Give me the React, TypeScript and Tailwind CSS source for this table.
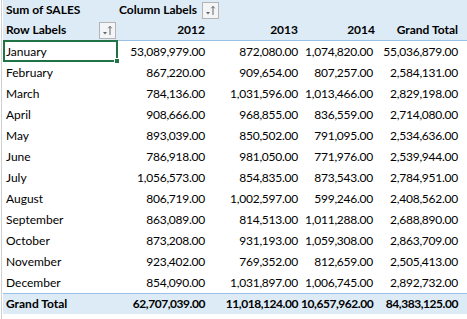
import React from 'react';

const rows: [string, string, string, string, string][] = [
  ['January', '53,089,979.00', '872,080.00', '1,074,820.00', '55,036,879.00'],
  ['February', '867,220.00', '909,654.00', '807,257.00', '2,584,131.00'],
  ['March', '784,136.00', '1,031,596.00', '1,013,466.00', '2,829,198.00'],
  ['April', '908,666.00', '968,855.00', '836,559.00', '2,714,080.00'],
  ['May', '893,039.00', '850,502.00', '791,095.00', '2,534,636.00'],
  ['June', '786,918.00', '981,050.00', '771,976.00', '2,539,944.00'],
  ['July', '1,056,573.00', '854,835.00', '873,543.00', '2,784,951.00'],
  ['August', '806,719.00', '1,002,597.00', '599,246.00', '2,408,562.00'],
  ['September', '863,089.00', '814,513.00', '1,011,288.00', '2,688,890.00'],
  ['October', '873,208.00', '931,193.00', '1,059,308.00', '2,863,709.00'],
  ['November', '923,402.00', '769,352.00', '812,659.00', '2,505,413.00'],
  ['December', '854,090.00', '1,031,897.00', '1,006,745.00', '2,892,732.00'],
];

const cols = 'grid grid-cols-[115px_90px_93px_75px_1fr]';

function FilterButton() {
  return (
    <span className="inline-flex items-center justify-center w-[17px] h-[17px] border border-[#b4b4b4] bg-[#f3f5f7]">
      <svg width="13" height="13" viewBox="0 0 13 13">
        <path d="M2 8 L6 8 L4 10.5 Z" fill="#666" />
        <path d="M9 11 L9 2.5" stroke="#666" strokeWidth="1" />
        <path d="M7.3 4.3 L9 2.3 L10.7 4.3" stroke="#666" strokeWidth="1" fill="none" />
      </svg>
    </span>
  );
}

export default function App() {
  return (
    <div
      className="w-[467px] h-[319px] bg-white text-black text-[12px] overflow-hidden"
      style={{ fontFamily: 'Lato, "Liberation Sans", sans-serif' }}
    >
      <div className="ml-px pl-px border-l border-[#d0d0d0] h-full">
        {/* Header */}
        <div className="bg-[#ddebf7] border-b border-[#9bc2e6] font-bold">
          <div className={`${cols} h-[20px] items-center`}>
            <div className="pl-[3px]">Sum of SALES</div>
            <div className="col-span-4 flex items-center gap-[5px] pl-[1px]">
              Column Labels
              <FilterButton />
            </div>
          </div>
          <div className={`${cols} h-[20px] items-center`}>
            <div className="pl-[3px] pr-[2px] flex items-center justify-between">
              Row Labels
              <FilterButton />
            </div>
            <div className="text-right pr-[3px]">2012</div>
            <div className="text-right pr-[3px]">2013</div>
            <div className="text-right pr-[1px]">2014</div>
            <div className="text-right pr-[9px]">Grand Total</div>
          </div>
        </div>

        {/* Body */}
        {rows.map((r, i) => (
          <div key={r[0]} className={`${cols} h-[21px] items-center tracking-[-0.25px]`}>
            <div className="relative pl-[3px] h-full flex items-center tracking-normal">
              {i === 0 && (
                <div className="absolute -top-px left-0 right-0 bottom-0 border-2 border-[#217346]">
                  <div className="absolute -right-[4px] -bottom-[4px] w-[6px] h-[6px] bg-[#217346] border border-white" />
                </div>
              )}
              {r[0]}
            </div>
            <div className="text-right pr-[3px]">{r[1]}</div>
            <div className="text-right pr-[3px]">{r[2]}</div>
            <div className="text-right pr-[3px]">{r[3]}</div>
            <div className="text-right pr-[9px]">{r[4]}</div>
          </div>
        ))}

        {/* Grand total */}
        <div className={`${cols} h-[21px] items-center bg-[#ddebf7] border-t border-[#9bc2e6] font-bold tracking-[-0.45px]`}>
          <div className="pl-[3px] tracking-normal">Grand Total</div>
          <div className="text-right pr-[3px]">62,707,039.00</div>
          <div className="text-right pr-[3px]">11,018,124.00</div>
          <div className="text-right pr-[3px]">10,657,962.00</div>
          <div className="text-right pr-[9px]">84,383,125.00</div>
        </div>
      </div>
    </div>
  );
}
